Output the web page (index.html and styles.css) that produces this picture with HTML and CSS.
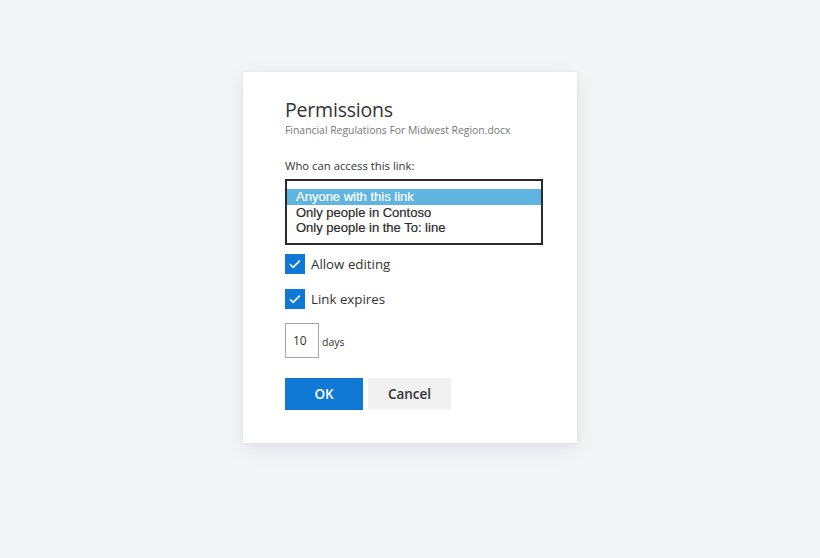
FILE: index.html
```html
<!DOCTYPE html>
<html>
<head>
<meta charset="utf-8">
<link rel="stylesheet" href="styles.css">
</head>
<body>
<div class="page">
  <div class="card">
    <h1 class="title">Permissions</h1>
    <div class="subtitle">Financial Regulations For Midwest Region.docx</div>
    <div class="label">Who can access this link:</div>
    <div class="listbox">
      <div class="option selected">Anyone with this link</div>
      <div class="option">Only people in Contoso</div>
      <div class="option">Only people in the To: line</div>
    </div>
    <div class="check-row first">
      <span class="checkbox"><svg width="20" height="20" viewBox="0 0 20 20"><path d="M5 10.2l3.2 3.2 6.6-6.8" fill="none" stroke="#fff" stroke-width="1.6"/></svg></span>
      <span class="check-label">Allow editing</span>
    </div>
    <div class="check-row">
      <span class="checkbox"><svg width="20" height="20" viewBox="0 0 20 20"><path d="M5 10.2l3.2 3.2 6.6-6.8" fill="none" stroke="#fff" stroke-width="1.6"/></svg></span>
      <span class="check-label">Link expires</span>
    </div>
    <div class="days-row">
      <div class="days-input">10</div>
      <span class="days-label">days</span>
    </div>
    <div class="buttons">
      <button class="btn btn-primary">OK</button>
      <button class="btn btn-default">Cancel</button>
    </div>
  </div>
</div>
</body>
</html>
```
FILE: styles.css
```css
html, body {
  margin: 0;
  padding: 0;
  background: #f4f5f7;
  width: 820px;
  height: 558px;
  overflow: hidden;
}
.page {
  display: flex;
  justify-content: center;
  padding-top: 72px;
}
.card {
  width: 334px;
  box-sizing: border-box;
  height: 371px;
  background: #fff;
  box-shadow: 0 6px 18px rgba(40, 60, 80, 0.10), 0 0 4px rgba(40, 60, 80, 0.05);
  padding: 24px 0 0 42px;
  display: flex;
  flex-direction: column;
  font-family: "Open Sans", "Noto Sans", sans-serif;
  color: #333;
}
.title {
  margin: 0;
  font-size: 19.5px;
  font-weight: 400;
  line-height: 27px;
  color: #333;
  letter-spacing: -0.2px;
}
.subtitle {
  font-size: 10.4px;
  line-height: 14px;
  color: #777;
}
.label {
  margin-top: 22px;
  font-size: 11.3px;
  line-height: 14px;
  color: #333;
}
.listbox {
  margin-top: 6px;
  width: 258px;
  box-sizing: border-box;
  border: 2px solid #2b2b2b;
  padding: 8px 0 7px 0;
  font-family: "Liberation Sans", Arial, sans-serif;
  font-size: 13px;
  color: #2a2a2a;
  -webkit-text-stroke: 0.2px #2a2a2a;
}
.option {
  height: 15.5px;
  line-height: 15.5px;
  padding-left: 9px;
  white-space: nowrap;
}
.option.selected {
  background: #5fb4e0;
  color: #fff;
  -webkit-text-stroke: 0.2px #fff;
}
.check-row {
  display: flex;
  align-items: center;
  gap: 6px;
  margin-top: 15px;
  height: 20px;
}
.check-row.first {
  margin-top: 9px;
}
.checkbox {
  width: 20px;
  height: 20px;
  background: #0f78d4;
  display: flex;
}
.check-label {
  font-size: 13.3px;
  color: #333;
}
.days-row {
  display: flex;
  align-items: center;
  gap: 3px;
  margin-top: 14px;
}
.days-input {
  width: 34px;
  height: 35px;
  box-sizing: border-box;
  border: 1px solid #a6a6a6;
  font-size: 12px;
  line-height: 33px;
  padding-left: 7px;
  color: #333;
}
.days-label {
  font-size: 10.5px;
  color: #333;
  margin-top: 4px;
}
.buttons {
  display: flex;
  gap: 5px;
  margin-top: 20px;
}
.btn {
  height: 32px;
  border: none;
  font-family: "Open Sans", "Noto Sans", sans-serif;
  font-size: 13.5px;
  font-weight: 600;
  padding: 0;
  cursor: pointer;
}
.btn-primary {
  width: 78px;
  background: #0f78d4;
  color: #fff;
}
.btn-default {
  width: 83px;
  background: #f1f1f1;
  color: #333;
}
```
